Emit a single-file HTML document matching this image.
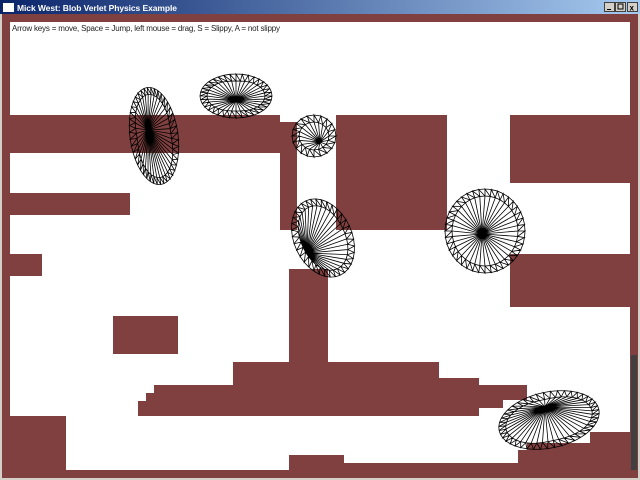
<!DOCTYPE html>
<html><head><meta charset="utf-8"><style>
html,body{margin:0;padding:0;width:640px;height:480px;overflow:hidden;background:#804040}
svg{display:block}
</style></head><body>
<svg id="s" width="640" height="480" xmlns="http://www.w3.org/2000/svg" shape-rendering="crispEdges">
<defs><linearGradient id="tb" x1="0" x2="1"><stop offset="0" stop-color="#0a246a"/><stop offset="1" stop-color="#a6caf0"/></linearGradient></defs>
<rect x="0" y="0" width="640" height="480" fill="#804040"/>
<rect x="0" y="0" width="640" height="14" fill="url(#tb)"/>
<rect x="3" y="3" width="11" height="9" fill="#fff"/>
<text x="17" y="11" font-family="Liberation Sans, sans-serif" font-size="8.5" font-weight="bold" fill="#fff" textLength="160">Mick West: Blob Verlet Physics Example</text>
<g fill="#d4d0c8" stroke="#404040" stroke-width="1">
<rect x="604.5" y="2.5" width="10" height="9"/><rect x="615.5" y="2.5" width="10" height="9"/><rect x="627.5" y="2.5" width="10" height="9"/></g>
<rect x="607" y="9" width="4" height="1" fill="#000"/><rect x="618" y="4" width="5" height="5" fill="none" stroke="#000"/>
<text x="629.5" y="10.5" font-family="Liberation Sans, sans-serif" font-size="8" font-weight="bold">x</text>
<rect x="0" y="14" width="2" height="466" fill="#d4d0c8"/>
<rect x="638" y="14" width="2" height="466" fill="#d4d0c8"/>
<rect x="0" y="478" width="640" height="2" fill="#d4d0c8"/>
<rect x="10" y="22" width="620" height="448" fill="#fff"/>
<g fill="#804040">
<rect x="10" y="115" width="118" height="38"/>
<rect x="128" y="115" width="52" height="38"/>
<rect x="178" y="115" width="102" height="38"/>
<rect x="280" y="122" width="17" height="108"/>
<rect x="336" y="115" width="111" height="115"/>
<rect x="510" y="115" width="120" height="68"/>
<rect x="10" y="193" width="120" height="22"/>
<rect x="10" y="254" width="32" height="22"/>
<rect x="510" y="254" width="120" height="53"/>
<rect x="289" y="269" width="39" height="93"/>
<rect x="113" y="316" width="65" height="38"/>
<rect x="233" y="362" width="206" height="54"/>
<rect x="439" y="378" width="40" height="38"/>
<rect x="479" y="385" width="48" height="15"/>
<rect x="479" y="400" width="24" height="8"/>
<rect x="154" y="385" width="79" height="31"/>
<rect x="146" y="393" width="8" height="23"/>
<rect x="138" y="401" width="8" height="15"/>
<rect x="10" y="416" width="56" height="54"/>
<rect x="289" y="455" width="55" height="15"/>
<rect x="344" y="463" width="180" height="7"/>
<rect x="518" y="450" width="72" height="20"/>
<rect x="527" y="443" width="63" height="10"/>
<rect x="590" y="432" width="40" height="38"/>
</g>
<rect x="631" y="355" width="6" height="115" fill="#404040"/>
<text x="12" y="31" font-family="Liberation Sans, sans-serif" font-size="8" fill="#222" textLength="268">Arrow keys = move, Space = Jump, left mouse = drag, S = Slippy, A = not slippy</text>
<g id="blobs" fill="none" stroke="#000" stroke-width="0.8" shape-rendering="auto"></g>
</svg>
<script>
var g=document.getElementById('blobs'),h='';
function blob(cx,cy,rx,ry,rot,hx,hy,N){
 var o=[],i=[],a,r=rot*Math.PI/180;
 for(var k=0;k<N;k++){a=k/N*2*Math.PI;
  var ex=rx*Math.cos(a),ey=ry*Math.sin(a);
  var px=ex*Math.cos(r)-ey*Math.sin(r),py=ex*Math.sin(r)+ey*Math.cos(r);
  o.push([cx+px,cy+py]);
  var s=1-7/Math.sqrt(px*px+py*py+1);i.push([cx+px*s,cy+py*s]);}
 var p='M'+o.map(q=>q.join(',')).join('L')+'Z M'+i.map(q=>q.join(',')).join('L')+'Z';
 for(k=0;k<N;k++){var n=(k+1)%N;p+='M'+i[k]+'L'+o[k]+'L'+i[n];
  p+='M'+hx+','+hy+'L'+i[k];}
 h+='<path d="'+p+'"/>';
}
blob(154,136,24,49,-8,148,130,44);
blob(236,96,36,22,0,236,100,36);
blob(314,136,22,21,0,320,142,20);
blob(323,238,29,41,-25,307,253,36);
blob(485,231,40,42,0,482,234,40);
blob(549,420,51,28,-12,545,407,44);
g.innerHTML=h;
</script>
</body></html>
